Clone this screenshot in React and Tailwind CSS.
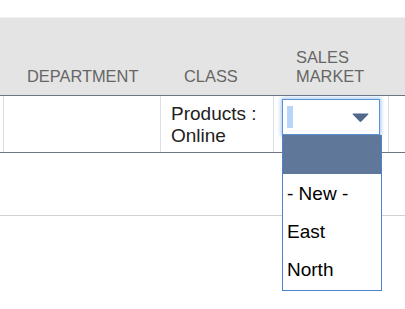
export default function App() {
  const font = { fontFamily: '"Liberation Sans", Arial, sans-serif' };
  return (
    <div className="w-[405px] h-[309px] bg-white overflow-hidden relative" style={font}>
      <div className="h-[18px] border-b border-[#f0f0f0]" />
      <div className="h-[78px] bg-[#e4e4e4] border-b border-[#6d7584] flex items-end text-[16.4px] leading-[19px] text-[#666666] pb-[9px]">
        <div className="w-[4px]" />
        <div className="w-[157px] pl-[23px]">DEPARTMENT</div>
        <div className="w-[113px] pl-[23px]">CLASS</div>
        <div className="w-[115px] pl-[22px]">
          SALES
          <br />
          MARKET
        </div>
      </div>
      <div className="h-[57px] border-b border-[#6d7584] flex text-[19px] leading-[22px] text-[#222222]">
        <div className="w-[4px] border-r border-[#dcdfe5]" />
        <div className="w-[157px] border-r border-[#dcdfe5]" />
        <div className="w-[113px] border-r border-[#dcdfe5] pl-[10px] pt-[7px]">
          Products :
          <br />
          Online
        </div>
        <div className="w-[115px] border-r border-[#dcdfe5] pl-[8px] pt-[3px]">
          <div className="relative">
            <div className="w-[98px] h-[36px] border border-[#5a92d6] shadow-[0_0_4px_1px_rgba(90,150,230,0.55)] bg-white flex items-start justify-between">
              <div className="ml-[4px] mt-[6px] w-[6px] h-[22px] bg-[#b6d5f8]" />
              <svg width="17" height="10" viewBox="0 0 17 10" className="mt-[13px] mr-[10px]">
                <path d="M1.2 0.5 H15.8 Q17 0.5 16.2 1.5 L9.4 8.6 Q8.5 9.5 7.6 8.6 L0.8 1.5 Q0 0.5 1.2 0.5 Z" fill="#50698a" />
              </svg>
            </div>
            <div className="absolute left-0 top-[36px] w-[100px] border border-t-0 border-[#4a84d0] bg-white text-black text-[19px] leading-[22px] pb-[2px] z-10">
              <div className="h-[39px] bg-[#5f7799]" />
              <div className="h-[38px] flex items-center pl-[4px] pt-[2px]">- New -</div>
              <div className="h-[38px] flex items-center pl-[4px] pt-[2px]">East</div>
              <div className="h-[38px] flex items-center pl-[4px] pt-[2px]">North</div>
            </div>
          </div>
        </div>
        <div className="flex-1" />
      </div>
      <div className="h-[63px] border-b border-[#d2d2d2]" />
    </div>
  );
}
